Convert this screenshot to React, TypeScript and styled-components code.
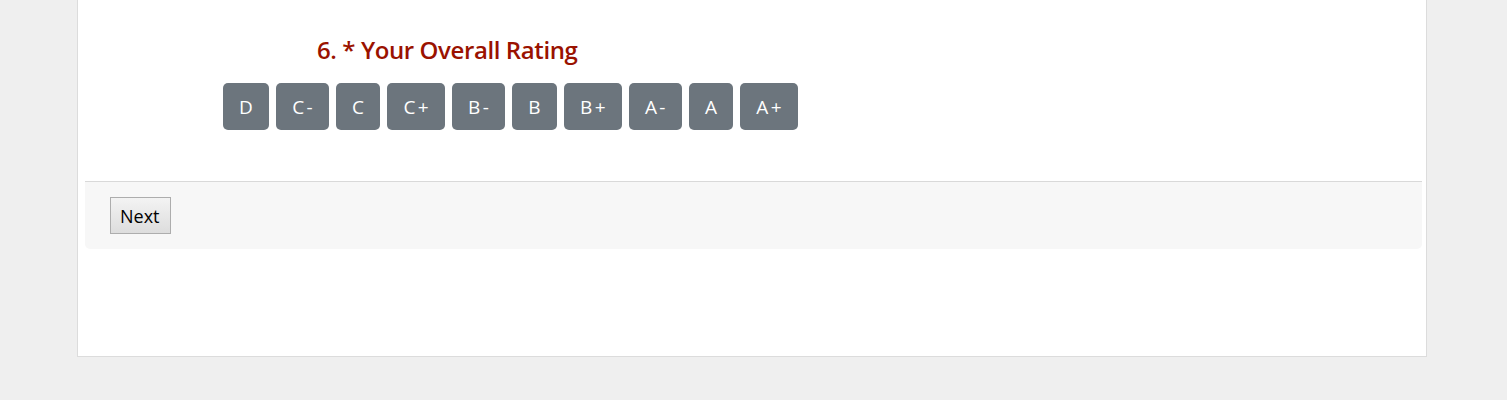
import React from "react";
import styled, { createGlobalStyle } from "styled-components";

const GlobalStyle = createGlobalStyle`
  *, *::before, *::after {
    box-sizing: border-box;
  }
  html, body {
    margin: 0;
    padding: 0;
    background: #efefef;
    font-family: "Open Sans", "Noto Sans", sans-serif;
  }
`;

const grades = ["D", "C-", "C", "C+", "B-", "B", "B+", "A-", "A", "A+"];

const Page = styled.div`
  padding: 0 0 0 77px;
  height: 400px;
`;

const Card = styled.div`
  width: 1350px;
  background: #fff;
  border: 1px solid #dcdcdc;
  border-top: none;
  padding: 0 4px 107px 7px;
`;

const Question = styled.div`
  padding: 35px 0 51px 138px;
`;

const Title = styled.h3`
  margin: 0 0 18px 94px;
  font-size: 24px;
  font-weight: 600;
  line-height: 30px;
  letter-spacing: -0.4px;
  color: #9a1200;
`;

const Grades = styled.div`
  display: flex;
  gap: 7px;
`;

const GradeButton = styled.button`
  height: 47px;
  padding: 0 14px 0 16px;
  border: none;
  border-radius: 5px;
  background: #6c757d;
  color: #fff;
  font-family: inherit;
  font-size: 19px;
  letter-spacing: 2.4px;
  cursor: pointer;
`;

const Footer = styled.div`
  display: flex;
  align-items: center;
  height: 68px;
  padding: 0 25px;
  background: #f7f7f7;
  border-top: 1px solid #d9d9d9;
  border-radius: 0 0 5px 5px;
`;

const NextButton = styled.button`
  height: 37px;
  padding: 1px 10px 0 9px;
  font-family: inherit;
  font-size: 18px;
  color: #000;
  background: linear-gradient(#f3f3f3, #dddddd);
  border: 1px solid #adadad;
  border-radius: 0;
`;

export default function App() {
  return (
    <>
      <GlobalStyle />
      <Page>
        <Card>
          <Question>
            <Title>6. * Your Overall Rating</Title>
            <Grades>
              {grades.map((g) => (
                <GradeButton key={g}>{g}</GradeButton>
              ))}
            </Grades>
          </Question>
          <Footer>
            <NextButton>Next</NextButton>
          </Footer>
        </Card>
      </Page>
    </>
  );
}
